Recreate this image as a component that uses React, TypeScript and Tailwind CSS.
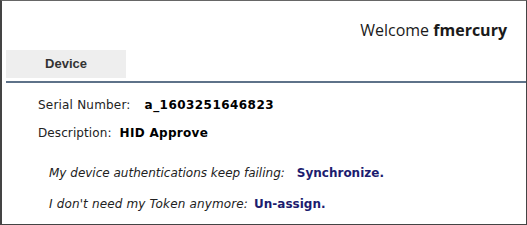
import React from "react";

export default function App() {
  return (
    <div className="w-[527px] h-[225px] bg-white border border-[#444] border-l-2 border-t-[#666] flex flex-col">
      <div className="flex justify-end pr-[19px] pt-[20px] h-[49px] text-[16px] text-[#1a1a1a] leading-[18px]" style={{ fontFamily: '"Open Sans", "Noto Sans", sans-serif' }}>
        <span>
          Welcome <span className="font-bold">fmercury</span>
        </span>
      </div>
      <div className="ml-[4px] flex flex-col">
        <div className="w-[120px] h-[28px] bg-[#eeeeee] flex items-center justify-center text-[13px] font-bold text-[#333]" style={{ fontFamily: '"Liberation Sans", Arial, sans-serif' }}>
          Device
        </div>
        <div className="mt-[3px] h-[2px] bg-[#5e7289]" />
      </div>
      <div className="pl-[36px] pt-[14px] text-[12px] text-[#222]" style={{ fontFamily: '"DejaVu Sans", Verdana, sans-serif' }}>
        <div className="flex items-center h-[16px]">
          <span className="tracking-[0.2px]">Serial Number:</span>
          <span className="ml-[14px] font-bold text-black tracking-[0.45px]">a_1603251646823</span>
        </div>
        <div className="flex items-center h-[16px] mt-[12px]">
          <span className="tracking-[0.1px]">Description:</span>
          <span className="ml-[8px] font-bold text-black tracking-[0.3px]">HID Approve</span>
        </div>
        <div className="pl-[11px] mt-[24px] italic flex items-center h-[16px]">
          <span>My device authentications keep failing:</span>
          <span className="ml-[12px] not-italic font-bold text-[#1c1c6e]">Synchronize.</span>
        </div>
        <div className="pl-[11px] mt-[15px] italic flex items-center h-[16px]">
          <span className="tracking-[0.15px]">I don't need my Token anymore:</span>
          <span className="ml-[6px] not-italic font-bold text-[#1c1c6e]">Un-assign.</span>
        </div>
      </div>
    </div>
  );
}
